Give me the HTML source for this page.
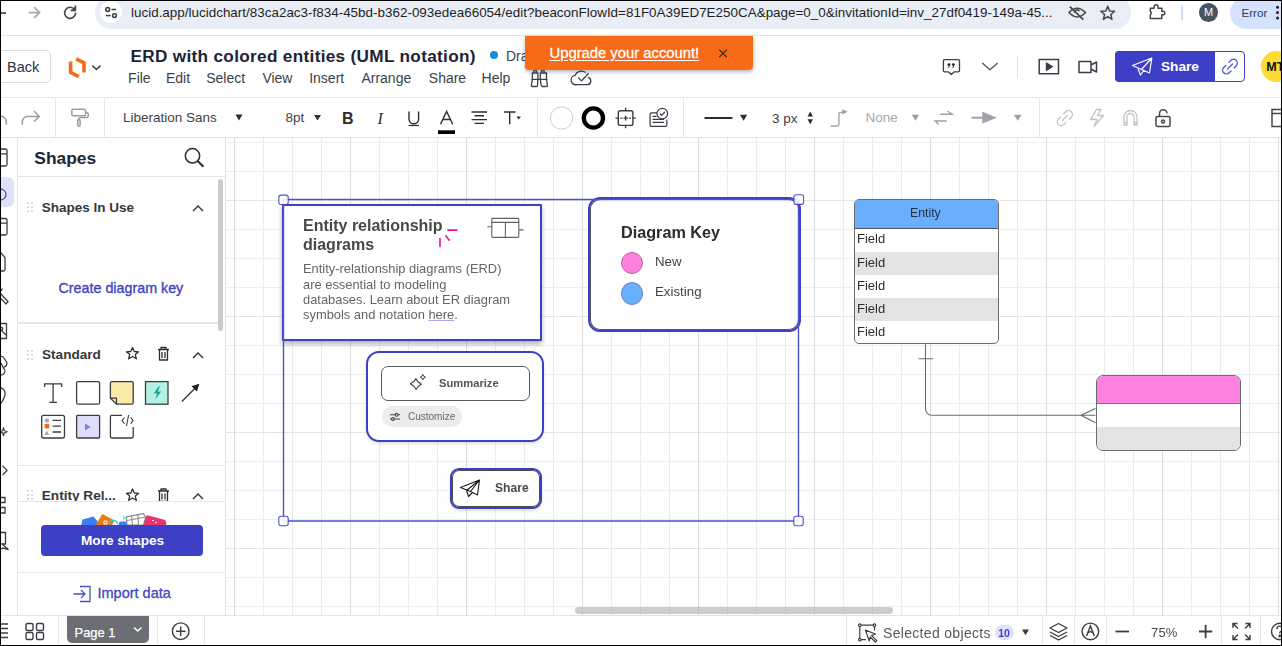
<!DOCTYPE html>
<html><head><meta charset="utf-8">
<style>
*{box-sizing:border-box;margin:0;padding:0}
html,body{width:1282px;height:646px;overflow:hidden;background:#fff;font-family:"Liberation Sans",sans-serif;position:relative}
.a{position:absolute}
svg{position:absolute;overflow:visible}
.t{position:absolute;white-space:nowrap;line-height:1}
#frame{position:absolute;left:0;top:0;width:1282px;height:646px;border:1px solid #000;z-index:100}
</style></head><body>
<div class="a" style="left:0px;top:0px;width:1282px;height:35px;background:#fff"></div>
<div class="a" style="left:0px;top:35px;width:1282px;height:1px;background:#e1e4e1"></div>
<div class="a" style="left:1px;top:12px;width:5px;height:2px;background:#5f6368"></div>
<svg style="left:0;top:0" width="1282" height="35"><g fill="none" stroke-width="1.6" stroke-linecap="square"><path d="M29.5 12.6 H39.5 M34.6 7.6 L39.6 12.6 L34.6 17.6" stroke="#a7a9ab"/><path d="M74.6 9.6 A5.5 5.5 0 1 0 75.6 13.4" stroke="#474747"/><path d="M75.4 6.4 V10.4 H71.4" stroke="#474747" fill="#474747"/></g></svg>
<div class="a" style="left:95px;top:-4px;width:1036px;height:32.7px;background:#e9eef6;border-radius:16.5px"></div>
<div class="a" style="left:100px;top:1.3px;width:22px;height:22px;background:#fff;border-radius:11px"></div>
<svg style="left:0;top:0" width="200" height="35"><g fill="none" stroke="#3c3c3c" stroke-width="1.5"><circle cx="107.7" cy="9.5" r="1.9"/><path d="M111.5 9.5 H116"/><circle cx="114.5" cy="15.6" r="1.9"/><path d="M106 15.6 H110.6"/></g></svg>
<div class="t" style="left:131px;top:6.22px;font-size:13.44px;color:#1f1f1f;font-weight:normal;">lucid.app/lucidchart/83ca2ac3-f834-45bd-b362-093edea66054/edit?beaconFlowId=81F0A39ED7E250CA&amp;page=0_0&amp;invitationId=inv_27df0419-149a-45...</div>
<svg style="left:0;top:0" width="1282" height="35"><g fill="none" stroke="#474747" stroke-width="1.5"><path d="M1069 12.6 Q1077 3.8 1085.5 12.6 Q1077 21.4 1069 12.6Z"/><path d="M1074.5 12.6 A2.8 2.8 0 0 1 1079.5 11"/><path d="M1069.8 6.6 L1083.3 19.6" stroke-width="1.7" stroke="#474747"/><path d="M1107.7 6.2 L1109.6 11 L1114.6 11.3 L1110.8 14.5 L1112 19.4 L1107.7 16.7 L1103.4 19.4 L1104.6 14.5 L1100.8 11.3 L1105.8 11Z" stroke-linejoin="round"/><path d="M1150.3 8.3 H1154.2 V6.6 A1.9 1.9 0 0 1 1158 6.6 V8.3 H1161.8 V11.2 H1163 A1.8 1.8 0 0 1 1163 14.8 H1161.8 V18.4 H1150.3 V14.6 A2 2 0 0 0 1150.3 11.2Z" stroke-linejoin="round"/><path d="M1182 5 V20" stroke="#a8c7fa" stroke-width="1.2"/></g></svg>
<div class="a" style="left:1199.1px;top:3px;width:18.8px;height:18.8px;background:#44555f;border-radius:50%"></div>
<div class="t" style="left:1204px;top:7.29px;font-size:11px;color:#fff;font-weight:normal;">M</div>
<div class="a" style="left:1230px;top:-3px;width:70px;height:31.5px;background:#d3e3fd;border-radius:16px"></div>
<div class="t" style="left:1241.5px;top:6.98px;font-size:11.6px;color:#2b3b5c;font-weight:normal;">Error</div>
<svg style="left:0;top:0" width="1282" height="35"><g fill="#1f1f1f"><circle cx="1277.5" cy="7.2" r="1.5"/><circle cx="1277.5" cy="12.6" r="1.5"/><circle cx="1277.5" cy="18" r="1.5"/></g></svg>
<div class="a" style="left:0px;top:36px;width:1282px;height:61.5px;background:#fff"></div>
<div class="a" style="left:0px;top:97px;width:1282px;height:1px;background:#e3e6ea"></div>
<div class="a" style="left:-10px;top:50px;width:60.5px;height:33px;border:1px solid #d9dde3;border-radius:5px;background:#fff"></div>
<div class="t" style="left:7px;top:59.73px;font-size:14.5px;color:#2d3340;font-weight:normal;">Back</div>
<svg style="left:0;top:0" width="200" height="98"><g fill="none" stroke="#f26b1d" stroke-width="2.6" stroke-linejoin="round"></g><g fill="none" stroke="#f26b1d" stroke-width="3.6" stroke-linecap="butt" stroke-linejoin="miter"><path d="M70.6 61.6 V72.3 L78.8 76.6"/><path d="M76.2 58.8 L84 62.9 V72.4"/></g><g fill="#ffb466"><path d="M68.8 61.6 L70.6 60.6 L72.4 61.6 L70.6 62.6Z"/><path d="M76.8 74.8 L78.6 73.8 L80.4 74.8 L78.6 75.8Z" opacity="0.5"/></g><path d="M92.4 65.7 L96.4 69.5 L100.4 65.7" fill="none" stroke="#3a3f4b" stroke-width="1.6"/></svg>
<div class="t" style="left:130.5px;top:47.74px;font-size:17.2px;color:#1b2336;font-weight:bold;letter-spacing:0.31px">ERD with colored entities (UML notation)</div>
<div class="a" style="left:490.2px;top:51.3px;width:8px;height:8px;background:#1a8cd8;border-radius:4px"></div>
<div class="t" style="left:506px;top:49.45px;font-size:14px;color:#3a3f4b;font-weight:normal;">Dra</div>
<div class="t" style="left:128.1px;top:70.95px;font-size:14px;color:#3a3f4b;font-weight:normal;">File</div>
<div class="t" style="left:166.0px;top:70.95px;font-size:14px;color:#3a3f4b;font-weight:normal;">Edit</div>
<div class="t" style="left:206.2px;top:70.95px;font-size:14px;color:#3a3f4b;font-weight:normal;">Select</div>
<div class="t" style="left:262.4px;top:70.95px;font-size:14px;color:#3a3f4b;font-weight:normal;">View</div>
<div class="t" style="left:309.2px;top:70.95px;font-size:14px;color:#3a3f4b;font-weight:normal;">Insert</div>
<div class="t" style="left:361.4px;top:70.95px;font-size:14px;color:#3a3f4b;font-weight:normal;">Arrange</div>
<div class="t" style="left:428.8px;top:70.95px;font-size:14px;color:#3a3f4b;font-weight:normal;">Share</div>
<div class="t" style="left:481.59999999999997px;top:70.95px;font-size:14px;color:#3a3f4b;font-weight:normal;">Help</div>
<svg style="left:0;top:0" width="700" height="98"><g fill="none" stroke="#3a3f4b" stroke-width="1.4" stroke-linejoin="round"><path d="M533.6 72.8 V70.9 H536.6 V72.8 M541.3 72.8 V70.9 H544.3 V72.8" stroke-width="1.2"/><path d="M532.3 79.4 V73 H537.9 V79.4 M540.3 79.4 V73 H546.5 V79.4 M531.5 79.4 H547.3" stroke-width="1.3"/><path d="M532.3 79.4 L531.4 85.4 Q531.3 86.5 532.4 86.5 H536.4 Q537.5 86.5 537.5 85.4 L537.9 79.4 M546.5 79.4 L547.4 85.4 Q547.5 86.5 546.4 86.5 H542.4 Q541.3 86.5 541.3 85.4 L540.3 79.4" stroke-width="1.3"/><path d="M587.8 77.4 A3.7 3.7 0 0 1 587.6 84.7 H576.6 A4.6 4.6 0 0 1 575 75.4 A7 7 0 0 1 585.6 72.6" stroke-width="1.3"/><path d="M578.2 77.6 L581.5 80.9 L588.6 73.2" stroke-width="1.3"/></g></svg>
<div class="a" style="left:525px;top:36px;width:228px;height:33.8px;background:#f76a17;border-radius:0 0 4px 4px;box-shadow:0 2px 4px rgba(0,0,0,0.3)"></div>
<div class="t" style="left:549.5px;top:45.67px;font-size:14.8px;color:#fff;font-weight:normal;text-decoration:underline;text-underline-offset:2px;-webkit-text-stroke:0.3px #fff">Upgrade your account!</div>
<svg style="left:0;top:0" width="800" height="98"><path d="M719.2 49.6 L726.8 57.2 M726.8 49.6 L719.2 57.2" stroke="#2d2520" stroke-width="1.2"/></svg>
<svg style="left:0;top:0" width="1282" height="98"><g fill="none" stroke="#3a3f4b" stroke-width="1.5" stroke-linejoin="round"><path d="M944.6 59.6 H958.3 Q959.5 59.6 959.5 60.8 V70.6 Q959.5 71.8 958.3 71.8 H954.3 L951.3 74.5 L948.3 71.8 H944.6 Q943.4 71.8 943.4 70.6 V60.8 Q943.4 59.6 944.6 59.6Z" stroke-width="1.3"/><path d="M982.3 63 L989.9 69.8 L997.6 63" stroke-width="1.2" stroke="#4a4f59"/><path d="M1039.2 59.5 H1058.5 V73.8 H1039.2Z"/><path d="M1046.5 63.2 L1052.2 66.7 L1046.5 70.2Z" fill="#3a3f4b"/><path d="M1079 61.5 H1091 V72.5 H1079Z"/><path d="M1091 65 L1096.5 62 V72 L1091 69"/><path d="M1017.5 55 V78" stroke="#dfe3e8" stroke-width="1"/></g><g fill="#222831"><circle cx="948.9" cy="64.6" r="1.4"/><circle cx="953.3" cy="64.6" r="1.4"/><path d="M949.9 64.6 Q950.2 67 947.8 68.3 L947.6 68 Q948.9 66.8 948.6 65.2Z M954.3 64.6 Q954.6 67 952.2 68.3 L952 68 Q953.3 66.8 953 65.2Z"/></g></svg>
<div class="a" style="left:1115px;top:51.2px;width:130px;height:30.5px;border:1.2px solid #3d40c4;border-radius:4px;background:#fff"></div>
<div class="a" style="left:1115px;top:51.2px;width:99.8px;height:30.5px;background:#3d40c4;border-radius:4px 0 0 4px"></div>
<svg style="left:0;top:0" width="1282" height="98"><g fill="none" stroke="#fff" stroke-width="1.5" stroke-linejoin="round"><path d="M1132.5 65.5 L1151.8 58 L1149.5 73 L1141.5 69.5Z M1141.5 69.5 L1151.8 58 M1137.5 67.5 L1140.5 75 L1143.8 70.5" stroke-width="1.2"/></g><g fill="none" stroke="#3d40c4" stroke-width="1.4"><g transform="translate(1230 66.6) rotate(-45)" stroke-width="1.3" stroke="#4c52cc" stroke-linecap="round"><path d="M-2.2 -3.8 H-5 A3.8 3.8 0 0 0 -5 3.8 H-2.2 M2.2 -3.8 H5 A3.8 3.8 0 0 1 5 3.8 H2.2 M-3.6 0 H3.6"/></g></g></svg>
<div class="t" style="left:1160.9px;top:59.70px;font-size:13.7px;color:#fff;font-weight:bold;">Share</div>
<div class="a" style="left:1261px;top:51.3px;width:30.6px;height:30.6px;background:#fedb34;border-radius:50%"></div>
<div class="t" style="left:1266.3px;top:61.13px;font-size:12.6px;color:#111;font-weight:bold;">MT</div>
<div class="a" style="left:0px;top:98px;width:1282px;height:39px;background:#fff"></div>
<div class="a" style="left:0px;top:137px;width:1282px;height:1px;background:#dde1e6"></div>
<div class="a" style="left:55px;top:98px;width:1px;height:39px;background:#e3e6ea"></div>
<div class="a" style="left:104px;top:98px;width:1px;height:39px;background:#e3e6ea"></div>
<div class="a" style="left:537px;top:98px;width:1px;height:39px;background:#e3e6ea"></div>
<div class="a" style="left:683px;top:98px;width:1px;height:39px;background:#e3e6ea"></div>
<div class="a" style="left:1039px;top:98px;width:1px;height:39px;background:#e3e6ea"></div>
<svg style="left:0;top:0" width="1282" height="138"><g fill="none" stroke="#9a9da3" stroke-width="1.5" stroke-linecap="round" stroke-linejoin="round"><path d="M1 116.3 A5.6 5.6 0 0 1 6.3 122 V124.3"/><path d="M22.3 124.3 V122 A5.6 5.6 0 0 1 27.9 116.4 H39.3 M34.4 111.4 L39.3 116.4 L34.4 121.3"/><rect x="71.8" y="109.2" width="13.8" height="6.6" rx="1.6"/><path d="M85.6 112.5 H86.5 A1.8 1.8 0 0 1 88.3 114.3 V115.6 A1.8 1.8 0 0 1 86.5 117.4 H80.5 A1.6 1.6 0 0 0 78.9 119"/><rect x="77.7" y="119.6" width="2.4" height="6.6" rx="1.2"/></g></svg>
<div class="t" style="left:123px;top:111.07px;font-size:13.5px;color:#3c3f45;font-weight:normal;">Liberation Sans</div>
<svg style="left:0;top:0" width="1282" height="138"><g fill="#2b2e33"><path d="M235.5 114.5 H242.5 L239 120.5Z"/><path d="M314 115 H321 L317.5 120.5Z"/></g></svg>
<div class="t" style="left:285.5px;top:111.07px;font-size:13.5px;color:#3c3f45;font-weight:normal;">8pt</div>
<div class="t" style="left:342px;top:110.66px;font-size:16px;color:#2b2e33;font-weight:bold;">B</div>
<div class="t" style="left:377.5px;top:110.66px;font-size:16px;color:#2b2e33;font-weight:normal;font-style:italic;font-family:'Liberation Serif'">I</div>
<svg style="left:0;top:0" width="1282" height="138"><g fill="none" stroke="#2b2e33" stroke-width="1.4"><path d="M409 111.5 V119 A4.8 4.8 0 0 0 418.6 119 V111.5"/><path d="M408.5 125.5 H419" stroke-width="1.2"/><path d="M440.5 124.3 L446.6 111.5 L452.7 124.3 M442.8 119.5 H450.4"/><path d="M471.5 112 H487 M474.5 115.8 H484 M471.5 119.6 H487 M474.5 123.4 H484"/><path d="M504 112 H515.5 M509.7 112 V124.3"/></g><rect x="438" y="130.3" width="17" height="3.7" fill="#000"/><path d="M516.5 116.5 H521 L518.7 119.5Z" fill="#2b2e33"/><circle cx="561.6" cy="118" r="11.2" fill="#fff" stroke="#cfcfcf" stroke-width="1"/><circle cx="593.4" cy="118" r="9.6" fill="none" stroke="#000" stroke-width="4.3"/><g fill="none" stroke="#3a3d42" stroke-width="1.4"><rect x="618.3" y="110.8" width="14.6" height="14.6" rx="2"/><path d="M625.6 107.8 V110.8 M625.6 125.4 V128.2 M615.5 118.1 H618.3 M632.9 118.1 H635.8 M620.3 118.1 H622.3 M623.3 118.1 H627.9 M628.9 118.1 H630.9 M625.6 115.8 V120.4"/><path d="M657 112.8 H651.5 A1.4 1.4 0 0 0 650.1 114.2 V125 A1.4 1.4 0 0 0 651.5 126.4 H665.4 A1.4 1.4 0 0 0 666.8 125 V119.5 M652.5 116.3 H656.5 M652.5 119.3 H664 M652.5 122.3 H664" stroke-width="1.2"/><circle cx="662.3" cy="113.6" r="5.3" fill="#fff" stroke-width="1.2"/><path d="M659.9 113.7 L661.6 115.3 L664.8 112" stroke-width="1.2"/></g><path d="M704.5 118 H732.5" stroke="#2b2e33" stroke-width="2"/><path d="M740 114.8 H747.2 L743.6 120.7Z" fill="#2b2e33"/><path d="M807.5 116.5 L810.2 111.6 L813 116.5Z M807.5 119.3 H813 L810.2 124.2Z" fill="#2b2e33"/></g></svg>
<div class="t" style="left:772px;top:111.57px;font-size:13.5px;color:#3c3f45;font-weight:normal;">3 px</div>
<svg style="left:0;top:0" width="1282" height="138"><g fill="none" stroke="#9fa2a7" stroke-width="1.4"><path d="M830.7 126 H837 Q838.9 126 838.9 124 V114.2 Q838.9 112.4 840.7 112.4 H843"/><path d="M842.3 109.2 L847.8 111.8 L842.3 114.4Z" fill="#9fa2a7" stroke="none"/><path d="M940 114.2 H952.2 L947.4 111 M946.8 121 H935.2 L938.6 124.4" /><path d="M971.5 117.7 H984" stroke-width="2"/><path d="M983 112.7 L995 117.7 L983 122.5Z" fill="#9fa2a7"/></g><g fill="#9fa2a7"><path d="M911.7 114.8 H919.2 L915.5 120.8Z"/><path d="M1013.7 114.8 H1021.8 L1017.7 120.8Z"/></g><g fill="none" stroke="#bfc2c6" stroke-width="1.3" stroke-linejoin="round"><g transform="translate(1064.8 118.2) rotate(-45)" stroke-linecap="round"><path d="M-2.3 -3.9 H-5.2 A3.9 3.9 0 0 0 -5.2 3.9 H-2.3 M2.3 -3.9 H5.2 A3.9 3.9 0 0 1 5.2 3.9 H2.3 M-3.7 0 H3.7"/></g><path d="M1096.5 109.5 L1090.5 119.5 H1097 L1094 126.5 L1103.5 115.5 H1097.5 L1101 109.5Z"/><path d="M1124 125 V117 A6.5 6.5 0 0 1 1137 117 V125 H1134 V117 A3.5 3.5 0 0 0 1127 117 V125Z M1124 122.5 H1127 M1134 122.5 H1137"/></g><g fill="none" stroke="#44474c" stroke-width="1.5"><rect x="1156" y="116.5" width="14" height="10" rx="1.5"/><path d="M1159.5 116.5 V113.5 A3.7 3.7 0 0 1 1167 113.5"/><circle cx="1163" cy="121.5" r="1.5"/><path d="M1272 109.5 H1290 V126.5 H1272Z M1272 113.5 H1290"/></g></svg>
<div class="t" style="left:865.5px;top:111.27px;font-size:13.5px;color:#a3a6ab;font-weight:normal;">None</div>
<div class="a" style="left:226px;top:138px;width:1056px;height:477px;background-color:#fff;background-image:linear-gradient(to right,#dcdcdc 1px,transparent 1px),linear-gradient(to bottom,#e4e4e4 1px,transparent 1px),linear-gradient(to right,#ebebeb 1px,transparent 1px),linear-gradient(to bottom,#eeeeee 1px,transparent 1px);background-size:116px 100%,100% 116px,29px 100%,100% 29px;background-position:8px 0,0 62px,8px 0,0 4px"></div>
<div class="a" style="left:282px;top:204px;width:259.5px;height:137px;background:#fff;border:2.2px solid #3d40c4;border-radius:1px;box-shadow:0 3px 5px rgba(0,0,0,0.3)"></div>
<div class="t" style="left:303.2px;top:218.16px;font-size:16px;color:#474747;font-weight:bold;;will-change:transform">Entity relationship</div>
<div class="t" style="left:303.2px;top:236.96px;font-size:16px;color:#474747;font-weight:bold;;will-change:transform">diagrams</div>
<div class="t" style="left:303.2px;top:263.18px;font-size:12.9px;color:#656565;font-weight:normal;;will-change:transform">Entity-relationship diagrams (ERD)</div>
<div class="t" style="left:303.2px;top:278.51px;font-size:12.9px;color:#656565;font-weight:normal;;will-change:transform">are essential to modeling</div>
<div class="t" style="left:303.2px;top:293.84px;font-size:12.9px;color:#656565;font-weight:normal;;will-change:transform">databases. Learn about ER diagram</div>
<div class="t" style="left:303.2px;top:309.17px;font-size:12.9px;color:#656565;font-weight:normal;;will-change:transform">symbols and notation <span style="text-decoration:underline;text-decoration-color:#a9a9f0">here</span>.</div>
<svg style="left:0;top:0" width="1282" height="646"><g fill="none" stroke="#e0139e" stroke-width="1.6" stroke-linecap="round"><path d="M448 230.1 H456.8 M445.8 235.8 L449.2 240.2 M440 238.6 V246.4"/></g><g fill="none" stroke="#5f6368" stroke-width="1.1"><rect x="491.8" y="218.4" width="27" height="19" rx="0.8"/><path d="M491.8 222.4 H518.8 M505.4 222.4 V237.4 M487.3 226.8 H491.8 M518.8 229.9 H523.5"/></g></svg>
<div class="a" style="left:588px;top:197px;width:213px;height:135px;background:#fff;border:2.6px solid #3d40c4;border-radius:12px;box-shadow:inset 0 0 0 1px #555"></div>
<div class="t" style="left:620.9px;top:223.79px;font-size:16.2px;color:#2b2b2b;font-weight:bold;;will-change:transform">Diagram Key</div>
<div class="a" style="left:620.8px;top:251.8px;width:22.6px;height:22.6px;background:#ff80df;border:0.8px solid #b06a9a;border-radius:50%"></div>
<div class="a" style="left:620.8px;top:282.1px;width:22.6px;height:22.6px;background:#6aaefe;border:0.8px solid #6a8ab0;border-radius:50%"></div>
<div class="t" style="left:654.8px;top:254.74px;font-size:13.3px;color:#444;font-weight:normal;;will-change:transform">New</div>
<div class="t" style="left:654.8px;top:285.04px;font-size:13.3px;color:#444;font-weight:normal;;will-change:transform">Existing</div>
<div class="a" style="left:366px;top:351px;width:177.5px;height:90.5px;background:#fff;border:2px solid #3d40c4;border-radius:13px;box-shadow:0 2px 3px rgba(0,0,0,0.12)"></div>
<div class="a" style="left:381px;top:366px;width:148.5px;height:34.6px;background:#fff;border:1.1px solid #5a5a5a;border-radius:7px"></div>
<div class="t" style="left:439.1px;top:378.12px;font-size:11.2px;color:#555;font-weight:bold;;will-change:transform">Summarize</div>
<div class="a" style="left:381.8px;top:406.2px;width:80px;height:20.6px;background:#ececec;border-radius:10.3px"></div>
<div class="t" style="left:408.2px;top:411.54px;font-size:10px;color:#666;font-weight:normal;;will-change:transform">Customize</div>
<svg style="left:0;top:0" width="1282" height="646"><g fill="none" stroke="#333" stroke-width="1.1" stroke-linejoin="round"><path d="M415.9 378.8 Q417.6 382.4 421.3 384.2 Q417.6 385.8 416.1 389.6 Q414.4 385.6 410.3 383.7 Q414.2 382.4 415.9 378.8Z"/><path d="M422.8 374.5 Q423.3 376.7 425.4 377.2 Q423.3 377.7 422.8 379.9 Q422.3 377.7 420.2 377.2 Q422.3 376.7 422.8 374.5Z" stroke-width="1"/></g><g fill="none" stroke="#444" stroke-width="1.1"><path d="M390 414.8 H400 M390 419 H400"/><circle cx="396.5" cy="414.8" r="1.4" fill="#ececec"/><circle cx="393" cy="419" r="1.4" fill="#ececec"/></g></svg>
<div class="a" style="left:450px;top:468.2px;width:92.2px;height:40.4px;background:#fff;border:2.4px solid #3d40c4;border-radius:9px;box-shadow:inset 0 0 0 1px #4a4a4a, 0 2px 3px rgba(0,0,0,0.12)"></div>
<div class="t" style="left:494.5px;top:481.96px;font-size:12.1px;color:#4a4a4a;font-weight:bold;;will-change:transform">Share</div>
<svg style="left:0;top:0" width="1282" height="646"><g fill="none" stroke="#1a1a1a" stroke-width="1.1" stroke-linejoin="round"><path d="M460.5 487.5 L479.5 480 L477.5 495 L470.5 491.5Z M470.5 491.5 L479.5 480 M466.5 490.5 L468.5 496.5 L472.5 492.5 M466.5 490.5 L479.5 480"/></g></svg>
<svg style="left:0;top:0" width="1282" height="646"><g fill="none" stroke="#4d52cb" stroke-width="1.4"><path d="M283.5 199.5 H798.5 V521 H283.5Z"/></g><g fill="#fff" stroke="#3d40c4" stroke-width="1.1" opacity="0.9"><rect x="278.8" y="195.1" width="9.4" height="9.4" rx="2.2"/><rect x="794" y="194.8" width="9.6" height="9.6" rx="2.2"/><rect x="278.8" y="516.3" width="9.4" height="9.4" rx="2.2"/><rect x="793.8" y="516.3" width="9.4" height="9.4" rx="2.2"/></g></svg>
<div class="a" style="left:853.7px;top:199px;width:145.2px;height:145.3px;background:#fff;border:1.2px solid #6b6b6b;border-radius:5px;overflow:hidden"></div>
<div class="a" style="left:854.9px;top:200.2px;width:142.8px;height:29px;background:#6aaefe;border-radius:4px 4px 0 0;border-bottom:1.1px solid #4a5666"></div>
<div class="a" style="left:854.9px;top:252px;width:142.8px;height:23.2px;background:#e3e3e3"></div>
<div class="a" style="left:854.9px;top:298.2px;width:142.8px;height:23.2px;background:#e3e3e3"></div>
<div class="t" style="left:910.4px;top:206.79px;font-size:12.3px;color:#243044;font-weight:normal;;will-change:transform">Entity</div>
<div class="t" style="left:857.2px;top:232.40px;font-size:13px;color:#2e2e2e;font-weight:normal;;will-change:transform">Field</div>
<div class="t" style="left:857.2px;top:255.60px;font-size:13px;color:#2e2e2e;font-weight:normal;;will-change:transform">Field</div>
<div class="t" style="left:857.2px;top:278.80px;font-size:13px;color:#2e2e2e;font-weight:normal;;will-change:transform">Field</div>
<div class="t" style="left:857.2px;top:302.00px;font-size:13px;color:#2e2e2e;font-weight:normal;;will-change:transform">Field</div>
<div class="t" style="left:857.2px;top:325.20px;font-size:13px;color:#2e2e2e;font-weight:normal;;will-change:transform">Field</div>
<svg style="left:0;top:0" width="1282" height="646"><g fill="none" stroke="#6b6b6b" stroke-width="1.1"><path d="M925.5 344.3 V408.5 A6.5 6.5 0 0 0 932 415.3 H1095.5 M918.5 358.8 H933 M1081 415.3 L1095.5 408.4 M1081 415.3 L1095.5 422.7"/></g></svg>
<div class="a" style="left:1095.9px;top:375.1px;width:145.5px;height:75.5px;background:#fff;border:1.2px solid #6b6b6b;border-radius:7px;overflow:hidden"></div>
<div class="a" style="left:1097px;top:376.2px;width:143.3px;height:27.8px;background:#ff80df;border-radius:6px 6px 0 0;border-bottom:1px solid #777"></div>
<div class="a" style="left:1097px;top:427px;width:143.3px;height:22.5px;background:#e3e3e3;border-radius:0 0 6px 6px"></div>
<div class="a" style="left:575px;top:606.8px;width:318px;height:6.8px;background:rgba(175,178,185,0.65);border-radius:3.4px"></div>
<div class="a" style="left:0px;top:138px;width:18px;height:477px;background:#fff"></div>
<div class="a" style="left:17px;top:138px;width:1px;height:477px;background:#e3e6ea"></div>
<div class="a" style="left:-10px;top:177px;width:23.5px;height:30.4px;background:#e0e0fb;border-radius:6px"></div>
<svg style="left:0;top:0" width="18" height="615"><g fill="none" stroke="#3a3d42" stroke-width="1.3"><path d="M-5 149 H5.5 Q7 149 7 150.5 V164.5 Q7 166 5.5 166 H-5 M-5 153.8 H7"/><circle cx="0.5" cy="194.5" r="5.5" stroke="#4d53d0"/><path d="M-5 218.5 H5.5 Q7 218.5 7 220 V233.5 Q7 235 5.5 235 H-5 M-5 223.2 H7"/><path d="M-5 253 H1 L5 257.5 V269.5 Q5 271 3.5 271 H-5"/><path d="M1 291 L2.5 288.5 M-1 292 L8 301.5 L6 304 L-3 294.5"/><path d="M-5 323.5 H6.5 V338.5 H-5 M-4 335 L1 330 L6 335 M1.5 327.5 A1.2 1.2 0 1 0 1.6 327.5"/><path d="M-2 358 A3.5 3.5 0 0 1 4 358 L6.5 362 A3.5 3.5 0 0 1 4 367 M1 363 L3.5 368 A3.5 3.5 0 0 1 -2 374"/><path d="M-5 389 A6 6 0 0 1 5 393 Q5.5 398 -2 407 M-2 390.5 A2.5 2.5 0 1 1 -2.2 390.5"/><path d="M3.5 427.5 L4.3 430.7 L7 431.8 L4.3 432.9 L3.5 436 L2.7 432.9 L0 431.8 L2.7 430.7Z" stroke-width="1.1"/><path d="M2.5 465.8 L7 470.4 L2.5 475"/><path d="M-5 497.5 H5 V502.5 H-5 M0 502.5 V507.5 M-5 507.5 H5 V513 H-5"/><path d="M-5 532.5 H5.5 V544 H2 L8.5 549.5 L3 548 L0 549.5 V544 H-5"/></g></svg>
<div class="a" style="left:18px;top:138px;width:207px;height:477px;background:#fff"></div>
<div class="a" style="left:225px;top:138px;width:1px;height:477px;background:#dfe3e8"></div>
<div class="a" style="left:18px;top:176px;width:207px;height:1px;background:#dfe3e8"></div>
<div class="t" style="left:34.3px;top:150.27px;font-size:17.4px;color:#1d2433;font-weight:bold;">Shapes</div>
<svg style="left:0;top:0" width="230" height="615"><g fill="none" stroke="#2b2e33" stroke-width="1.5"><circle cx="192.5" cy="155.8" r="7.2"/><path d="M197.7 161 L203.5 166.8" stroke-width="2"/></g></svg>
<div class="a" style="left:218px;top:179px;width:5px;height:151.5px;background:#c9cbcf;border-radius:3px"></div>
<svg style="left:0;top:0" width="230" height="615"><rect x="27.2" y="202.5" width="1.6" height="1.6" fill="#c2c5ca"/><rect x="31.2" y="202.5" width="1.6" height="1.6" fill="#c2c5ca"/><rect x="27.2" y="206.5" width="1.6" height="1.6" fill="#c2c5ca"/><rect x="31.2" y="206.5" width="1.6" height="1.6" fill="#c2c5ca"/><rect x="27.2" y="210.5" width="1.6" height="1.6" fill="#c2c5ca"/><rect x="31.2" y="210.5" width="1.6" height="1.6" fill="#c2c5ca"/><rect x="27.2" y="350" width="1.6" height="1.6" fill="#c2c5ca"/><rect x="31.2" y="350" width="1.6" height="1.6" fill="#c2c5ca"/><rect x="27.2" y="354" width="1.6" height="1.6" fill="#c2c5ca"/><rect x="31.2" y="354" width="1.6" height="1.6" fill="#c2c5ca"/><rect x="27.2" y="358" width="1.6" height="1.6" fill="#c2c5ca"/><rect x="31.2" y="358" width="1.6" height="1.6" fill="#c2c5ca"/><rect x="27.2" y="490" width="1.6" height="1.6" fill="#c2c5ca"/><rect x="31.2" y="490" width="1.6" height="1.6" fill="#c2c5ca"/><rect x="27.2" y="494" width="1.6" height="1.6" fill="#c2c5ca"/><rect x="31.2" y="494" width="1.6" height="1.6" fill="#c2c5ca"/><rect x="27.2" y="498" width="1.6" height="1.6" fill="#c2c5ca"/><rect x="31.2" y="498" width="1.6" height="1.6" fill="#c2c5ca"/><g fill="none" stroke="#2b2e33" stroke-width="1.4"><path d="M193 211 L198 206 L203 211"/><path d="M193 358 L198 353 L203 358"/><path d="M193 499 L198 494 L203 499"/></g><g fill="none" stroke="#2b2e33" stroke-width="1.3" stroke-linejoin="round"><path d="M132.5 347.5 L134.3 351.5 L138.6 351.8 L135.3 354.6 L136.4 358.8 L132.5 356.5 L128.6 358.8 L129.7 354.6 L126.4 351.8 L130.7 351.5Z"/><path d="M158 349.5 H169 M161 349.5 V347.5 H166 V349.5 M159.5 349.5 V360 H167.5 V349.5 M162 352 V358 M165 352 V358"/><path d="M132.5 489 L134.3 493 L138.6 493.3 L135.3 496.1 L136.4 500.3 L132.5 498 L128.6 500.3 L129.7 496.1 L126.4 493.3 L130.7 493Z"/><path d="M158 491 H169 M161 491 V489 H166 V491 M159.5 491 V501.5 H167.5 V491 M162 493.5 V499.5 M165 493.5 V499.5"/></g></svg>
<div class="t" style="left:41.8px;top:201.07px;font-size:13.5px;color:#35383d;font-weight:bold;">Shapes In Use</div>
<div class="t" style="left:58.5px;top:280.90px;font-size:14.3px;color:#3f45c4;font-weight:normal;-webkit-text-stroke:0.35px #3f45c4">Create diagram key</div>
<div class="a" style="left:18px;top:322px;width:200px;height:1.5px;background:#e3e6ea"></div>
<div class="t" style="left:42px;top:347.89px;font-size:13.6px;color:#35383d;font-weight:bold;">Standard</div>
<svg style="left:0;top:0" width="230" height="615"><g fill="none" stroke="#3a3d42" stroke-width="1.3"><path d="M44.6 387 V383.8 H61.6 V387 M53.1 383.8 V402.3 M49.3 402.3 H57"/><rect x="76.6" y="381.6" width="23" height="22.6" rx="1.5"/><path d="M112 381.6 H131.7 Q133.2 381.6 133.2 383.1 V402.7 Q133.2 404.2 131.7 404.2 H116.5 L110.4 398.2 V383.1 Q110.4 381.6 112 381.6Z" fill="#fbeaa9"/><path d="M110.4 398.2 H116.5 V404.2"/><rect x="145.5" y="381.6" width="22.5" height="22.6" fill="#b4f0e6"/><path d="M181.9 401.5 L196 387.3" stroke-width="1.4"/><rect x="41.7" y="415.3" width="22.8" height="22.7" rx="2"/><rect x="76.6" y="415.3" width="23" height="22.7" rx="1" fill="#dedefb"/><path d="M122 415.3 H111.8 Q110.4 415.3 110.4 416.8 V436.6 Q110.4 438 111.8 438 H131.8 Q133.2 438 133.2 436.6 V427"/><path d="M124.5 417.5 L122 420.6 L124.5 423.7 M130.6 417.5 L133.1 420.6 L130.6 423.7 M128.6 415 L126.5 426" stroke-width="1.1"/><path d="M52.6 420.4 H61 M52.6 426.2 H61 M52.6 432 H61"/></g><path d="M199.3 383.8 L191.5 386.2 L196.9 391.6Z" fill="#1d1f22"/><path d="M158.5 386.5 L153.8 393.5 H157.2 L155.2 399.5 L161.2 391.5 H157.7 L159.8 386.5Z" fill="#17a88c"/><path d="M85 423.4 L90.6 426.9 L85 430.4Z" fill="#7a7cf5"/><circle cx="46.9" cy="420.4" r="2.2" fill="#a7abb1"/><rect x="44.6" y="423.8" width="4.6" height="4.6" fill="#f26b1d"/><path d="M46.9 430.5 L49.3 435 H44.5Z" fill="#a7abb1"/></svg>
<div class="a" style="left:18px;top:464.5px;width:207px;height:1.5px;background:#e3e6ea"></div>
<div class="t" style="left:41.8px;top:489.19px;font-size:13.6px;color:#35383d;font-weight:bold;">Entity Rel...</div>
<div class="a" style="left:18px;top:501px;width:207px;height:114px;background:#fff"></div>
<div class="a" style="left:18px;top:501px;width:207px;height:1px;background:#e3e6ea"></div>
<svg style="left:0;top:0" width="230" height="615"><path d="M81.2 525 L82.4 519.4 L93.3 516.4 L97.5 521 L98 525Z" fill="#3b82f0"/><path d="M95.7 525 L102.3 514 L114.5 520.5 L112 525Z" fill="#ef7a10"/><path d="M104 521 h3 v3 h-3z" fill="none" stroke="#fff" stroke-width="1"/><path d="M109.5 525 A4 4 0 0 1 117.5 524" fill="none" stroke="#37c9d8" stroke-width="1.6"/><path d="M118.5 525 L119.5 521.5 H126.5 L127.5 525Z" fill="#3b82f0"/><path d="M123.5 515 L125.5 518.5 L123 520Z" fill="#4fe0f0"/><path d="M127 525 L126.2 516.8 L143.5 513.6 L145.6 517.5 L143.5 525Z" fill="#fff" stroke="#888c92" stroke-width="1.2" stroke-linejoin="round"/><path d="M126.7 520.5 L144.5 517.2 M132.5 525 L131.5 515.8 M138.5 525 L137.8 514.7" stroke="#888c92" stroke-width="1.1"/><path d="M143.6 525 L146 516.5 Q147 515 148.5 515.5 L165 520 Q166.5 521 166.2 525Z" fill="#e8336e"/><path d="M152 520.5 h2 M155 522 l2 1" stroke="#fff" stroke-width="0.9"/></svg>
<div class="a" style="left:41px;top:525px;width:162px;height:30.6px;background:#3d40c4;border-radius:4px"></div>
<div class="t" style="left:81px;top:533.99px;font-size:13.6px;color:#fff;font-weight:bold;">More shapes</div>
<div class="a" style="left:18px;top:571.5px;width:207px;height:1.2px;background:#e3e6ea"></div>
<svg style="left:0;top:0" width="230" height="615"><g fill="none" stroke="#4a50c8" stroke-width="1.3"><path d="M73.5 594 H85 M81 590 L85 594 L81 598"/><path d="M80 586.5 H90 V601.5 H80"/></g></svg>
<div class="t" style="left:97.5px;top:585.93px;font-size:14.5px;color:#3f45c4;font-weight:normal;-webkit-text-stroke:0.3px #3f45c4">Import data</div>
<div class="a" style="left:0px;top:615px;width:1282px;height:31px;background:#fff"></div>
<div class="a" style="left:0px;top:615px;width:1282px;height:1px;background:#dfe3e8"></div>
<div class="a" style="left:58px;top:616px;width:1px;height:30px;background:#e3e6ea"></div>
<div class="a" style="left:157px;top:616px;width:1px;height:30px;background:#e3e6ea"></div>
<div class="a" style="left:204px;top:616px;width:1px;height:30px;background:#e3e6ea"></div>
<div class="a" style="left:846px;top:616px;width:1px;height:30px;background:#e3e6ea"></div>
<div class="a" style="left:1042px;top:616px;width:1px;height:30px;background:#e3e6ea"></div>
<div class="a" style="left:1074px;top:616px;width:1px;height:30px;background:#e3e6ea"></div>
<div class="a" style="left:1106px;top:616px;width:1px;height:30px;background:#e3e6ea"></div>
<div class="a" style="left:1221px;top:616px;width:1px;height:30px;background:#e3e6ea"></div>
<div class="a" style="left:1260px;top:616px;width:1px;height:30px;background:#e3e6ea"></div>
<svg style="left:0;top:0" width="1282" height="646"><g fill="none" stroke="#3a3d42" stroke-width="1.4"><path d="M0 624 H8 M0 628.5 H8 M0 633 H8 M0 637.5 H8"/><rect x="26" y="623.5" width="7" height="7" rx="1.5"/><rect x="36.5" y="623.5" width="7" height="7" rx="1.5"/><rect x="26" y="632.5" width="7" height="7" rx="1.5"/><rect x="36.5" y="632.5" width="7" height="7" rx="1.5"/><circle cx="180.7" cy="631.2" r="8.3"/><path d="M180.7 626.5 V636 M176 631.2 H185.5"/><path d="M859.8 625.2 H874.5 V630.6 M859.8 625.2 V639.7 H865.9" stroke-width="1.2"/><circle cx="859.8" cy="625.2" r="1.3" fill="#fff" stroke-width="1.1"/><circle cx="874.5" cy="625.2" r="1.3" fill="#fff" stroke-width="1.1"/><circle cx="859.8" cy="639.7" r="1.3" fill="#fff" stroke-width="1.1"/><path d="M865.4 630.1 L875.5 634 L871.6 635.6 L876.8 640.6 L875.4 642 L870.2 637 L869.2 640.8Z" stroke-linejoin="round" stroke-width="1.2"/><path d="M1058.5 623.5 L1067 628 L1058.5 632.5 L1050 628Z M1050 632 L1058.5 636.5 L1067 632 M1050 635.5 L1058.5 640 L1067 635.5" stroke-linejoin="round"/><circle cx="1090.4" cy="631.4" r="8.3"/><path d="M1086.5 636 L1090.4 626 L1094.3 636 M1087.8 633 L1090.4 631.5 L1093 633"/><path d="M1115.5 631.5 H1129" stroke-width="1.8"/><path d="M1199 631.5 H1212.3 M1205.6 624.8 V638.2" stroke-width="1.8"/><path d="M1233 628 V623.5 H1237.5 M1250 628 V623.5 H1245.5 M1233 635 V639.5 H1237.5 M1250 635 V639.5 H1245.5 M1233 623.5 L1238 628.5 M1250 623.5 L1245 628.5 M1233 639.5 L1238 634.5 M1250 639.5 L1245 634.5"/><circle cx="1279.8" cy="631.5" r="8.3"/><path d="M1277 629.2 A2.8 2.8 0 1 1 1280.5 631.6 Q1279.8 632.2 1279.8 633.5" stroke-width="1.3"/><circle cx="1279.8" cy="636" r="0.7" fill="#3a3d42"/></g><g fill="#3a3d42"><path d="M1022 629.5 H1029 L1025.5 635.2Z"/></g></svg>
<div class="a" style="left:67px;top:616px;width:81.5px;height:26.5px;background:#6b6e73;border-radius:0 0 5px 5px"></div>
<div class="t" style="left:74.6px;top:627.08px;font-size:12.9px;color:#fff;font-weight:normal;-webkit-text-stroke:0.25px #fff">Page 1</div>
<svg style="left:0;top:0" width="1282" height="646"><path d="M134 627.5 L137.7 631 L141.4 627.5" fill="none" stroke="#fff" stroke-width="1.5"/></svg>
<div class="t" style="left:883px;top:625.75px;font-size:14px;color:#55585d;font-weight:normal;letter-spacing:0.32px">Selected objects</div>
<div class="a" style="left:995.3px;top:625.4px;width:18.4px;height:14.6px;background:#e1e1fb;border-radius:7.3px"></div>
<div class="t" style="left:998.2px;top:627.51px;font-size:10.5px;color:#3d40c4;font-weight:bold;">10</div>
<div class="t" style="left:1151px;top:626.30px;font-size:13px;color:#46494e;font-weight:normal;letter-spacing:0.2px">75%</div>
<div id="frame"></div>
</body></html>
